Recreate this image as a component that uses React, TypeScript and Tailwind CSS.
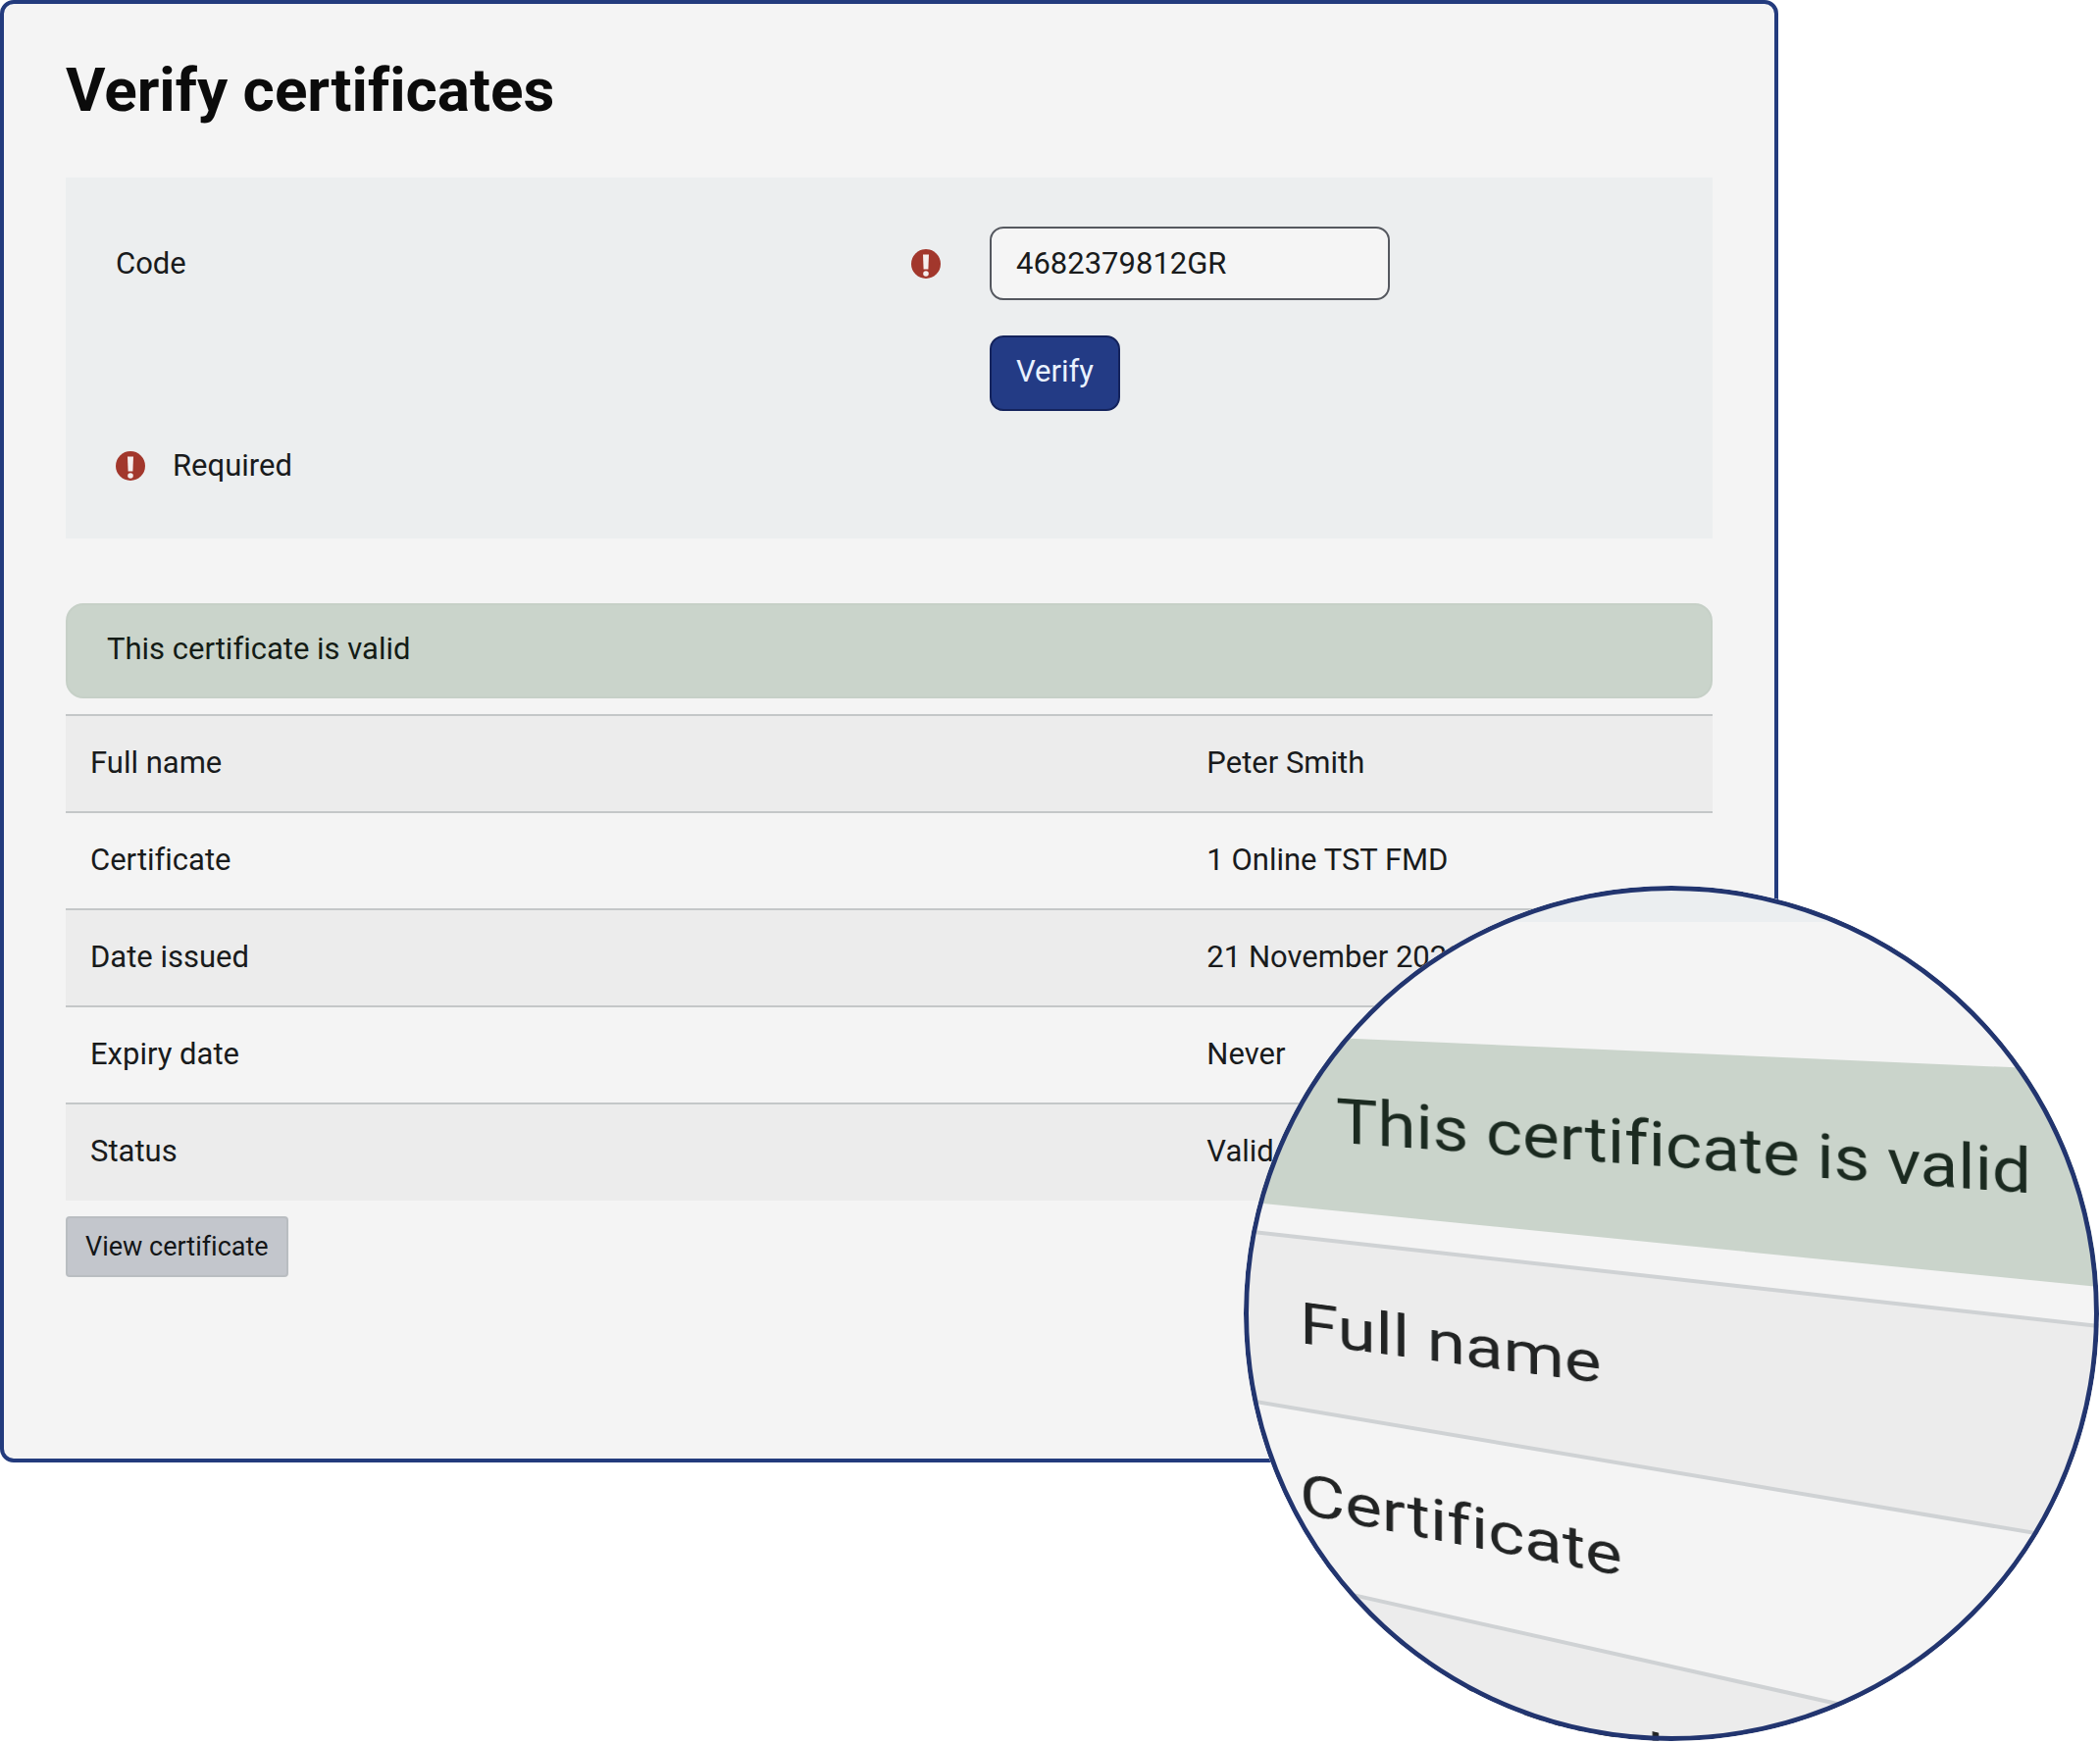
import React from "react";

const details = [
  { label: "Full name", value: "Peter Smith" },
  { label: "Certificate", value: "1 Online TST FMD" },
  { label: "Date issued", value: "21 November 2023" },
  { label: "Expiry date", value: "Never" },
  { label: "Status", value: "Valid" },
];

function RequiredIcon() {
  return (
    <svg viewBox="0 0 30 30" className="size-[30px] shrink-0" role="img" aria-label="Required">
      <circle cx="15" cy="15" r="15" fill="#a2372c" />
      <path d="M12 5.5h6l-0.6 15h-4.8z" fill="#f5eeee" />
      <circle cx="15" cy="25" r="2.8" fill="#f5eeee" />
    </svg>
  );
}

function VerifyForm() {
  return (
    <form
      className="bg-[#eceeef] px-[51px] pt-[50px] pb-[54px]"
      onSubmit={(e) => e.preventDefault()}
    >
      <div className="grid grid-cols-[56.5%_1fr] items-center gap-y-9">
        <div className="flex items-center justify-between pr-[50px]">
          <label htmlFor="code">Code</label>
          <RequiredIcon />
        </div>
        <input
          id="code"
          type="text"
          required
          defaultValue="4682379812GR"
          className="h-[75px] w-[408px] max-w-full rounded-[14px] border-2 border-[#55585f] bg-[#f5f5f5] px-[25px]"
        />
        <button
          type="submit"
          className="col-start-2 h-[77px] justify-self-start rounded-[14px] border-2 border-[#14235c] bg-[#233b85] px-[25px] pb-1 text-[#e9f2ff]"
        >
          Verify
        </button>
      </div>
      <p className="mt-9 flex items-center gap-7">
        <RequiredIcon />
        Required
      </p>
    </form>
  );
}

function DetailsTable() {
  return (
    <table className="mt-4 w-full table-fixed border-collapse">
      <tbody>
        {details.map((d) => (
          <tr key={d.label} className="h-[99px] border-t-2 border-[#c4c7c8] odd:bg-[#ececec]">
            <th scope="row" className="w-[67.8%] px-[25px] pb-0.5 text-left font-normal">
              {d.label}
            </th>
            <td className="px-[25px] pb-0.5">{d.value}</td>
          </tr>
        ))}
      </tbody>
    </table>
  );
}

function Magnifier() {
  return (
    <div
      aria-hidden="true"
      className="absolute right-px bottom-0.5 size-[872px] overflow-hidden rounded-full bg-[#f4f4f4] text-[71px] leading-none whitespace-nowrap text-[#222424]"
    >
      <svg viewBox="0 0 872 872" className="absolute inset-0 size-full">
        <rect width="872" height="37" fill="#ebeef0" />
        <polygon points="0,151 872,189 872,409 0,322" fill="#cad4cb" />
        <polygon points="0,352 872,449 872,672 0,524" fill="#ececec" />
        <polygon points="0,698 872,894 0,894" fill="#ececec" />
        <g stroke="#cfd2d4" strokeWidth="4">
          <path d="M0 352 872 449" />
          <path d="M0 524 872 671" />
          <path d="M0 698 872 894" />
        </g>
      </svg>
      <span className="absolute top-[204px] left-[94px] origin-left rotate-x-25 skew-y-[4.6deg] text-[#1b2a20]">
        This certificate is valid
      </span>
      <span className="absolute top-[410px] left-[57px] origin-left rotate-x-33 skew-y-[9deg]">
        Full name
      </span>
      <span className="absolute top-[584px] left-[57px] origin-left rotate-x-33 skew-y-[13deg]">
        Certificate
      </span>
      <span className="absolute top-[764px] left-[57px] origin-left rotate-x-33 skew-y-[16deg]">
        Date issued
      </span>
      <div className="absolute inset-0 rounded-full border-[5px] border-[#22356f]" />
    </div>
  );
}

export default function App() {
  return (
    <div className="relative bg-white pr-[328px] pb-[286px] font-['Roboto',sans-serif] text-[31px] leading-10 text-[#191b1c] [font-variant-ligatures:none]">
      <main className="rounded-[14px] border-4 border-[#233b7d] bg-[#f4f4f4] px-[63px] pt-[51px] pb-[185px]">
        <h1 className="text-[62px] leading-[74px] font-bold text-[#0b0b0b]">Verify certificates</h1>
        <div className="mt-[52px]">
          <VerifyForm />
        </div>
        <div
          role="status"
          className="mt-[66px] flex h-[97px] items-center rounded-[18px] border-2 border-[#c6d0c7] bg-[#cad4cb] px-10 pb-1 text-[#141c16]"
        >
          This certificate is valid
        </div>
        <DetailsTable />
        <button
          type="button"
          className="mt-4 block h-[62px] rounded-[4px] border-2 border-[#b9bdc1] bg-[#c3c6cc] px-[18px] text-[27px] text-[#141618]"
        >
          View certificate
        </button>
      </main>
      <Magnifier />
    </div>
  );
}
